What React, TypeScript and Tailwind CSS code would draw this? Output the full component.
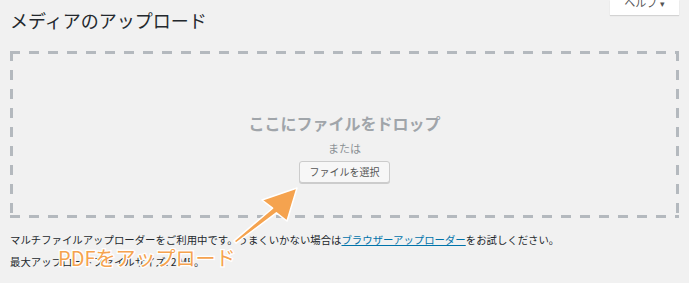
import React from 'react'

const jp = "font-['Noto_Sans_CJK_JP','Noto_Sans',sans-serif]"

export default function App() {
  return (
    <div className={`relative w-[689px] h-[283px] overflow-hidden bg-[#f1f1f1] text-[#23282d] ${jp}`}>
      {/* header */}
      <div className="flex justify-between items-start pl-[10px] pr-[10px]">
        <h1 className="mt-[8px] text-[18px] leading-[24px] font-normal">メディアのアップロード</h1>
        <div className="w-[69px] h-[15px] overflow-hidden bg-white shadow-[0_1px_1px_rgba(0,0,0,0.12)] flex justify-center">
          <span className="-mt-[5px] text-[11px] leading-[14px] text-[#555]">
            ヘルプ <span className="text-[9px]">▾</span>
          </span>
        </div>
      </div>

      {/* drop zone */}
      <div className="mx-[10px] mt-[19px] h-[167px] p-[3px] bg-no-repeat [background-image:repeating-linear-gradient(90deg,#b4b9be_0_10px,transparent_10px_19px),repeating-linear-gradient(90deg,#b4b9be_0_10px,transparent_10px_19px),repeating-linear-gradient(180deg,#b4b9be_0_10px,transparent_10px_19px),repeating-linear-gradient(180deg,#b4b9be_0_10px,transparent_10px_19px)] [background-size:100%_3px,100%_3px,3px_100%,3px_100%] [background-position:0_0,0_100%,0_0,100%_0] flex flex-col items-center">
        <div className="pt-[59px] text-[16px] leading-[20px] font-semibold text-[#a0a5aa]">ここにファイルをドロップ</div>
        <div className="mt-[8px] text-[11px] leading-[14px] text-[#8c9196]">または</div>
        <button className="mt-[6px] w-[91px] h-[22px] bg-[#f7f7f7] border border-[#ccc] rounded-[3px] shadow-[0_1px_0_#ccc] text-[10px] leading-[20px] text-[#555]">
          ファイルを選択
        </button>
      </div>

      <p className="mt-[15px] ml-[10px] text-[10.4px] leading-[14px] whitespace-nowrap">
        マルチファイルアップローダーをご利用中です。うまくいかない場合は
        <a className="text-[#0073aa] underline">ブラウザーアップローダー</a>
        をお試しください。
      </p>
      <p className="mt-[8px] ml-[10px] text-[10.4px] leading-[14px] whitespace-nowrap">最大アップロードファイルサイズ: 2 MB。</p>

      {/* annotation */}
      <svg className="absolute left-0 top-0 pointer-events-none" width="689" height="283" viewBox="0 0 689 283">
        <polygon
          points="234,240.9 272.6,208.2 262,200 297,188 287,221 276.4,212.8 236,243.1"
          fill="#f5a34f"
          stroke="#fff"
          strokeWidth="1.5"
          strokeLinejoin="round"
        />
      </svg>
      <div className="absolute left-[58px] top-[247px] text-[20px] leading-[22px] text-[#f5a34f] [paint-order:stroke_fill] [-webkit-text-stroke:2.5px_#fff] whitespace-nowrap">
        PDFをアップロード
      </div>
    </div>
  )
}
